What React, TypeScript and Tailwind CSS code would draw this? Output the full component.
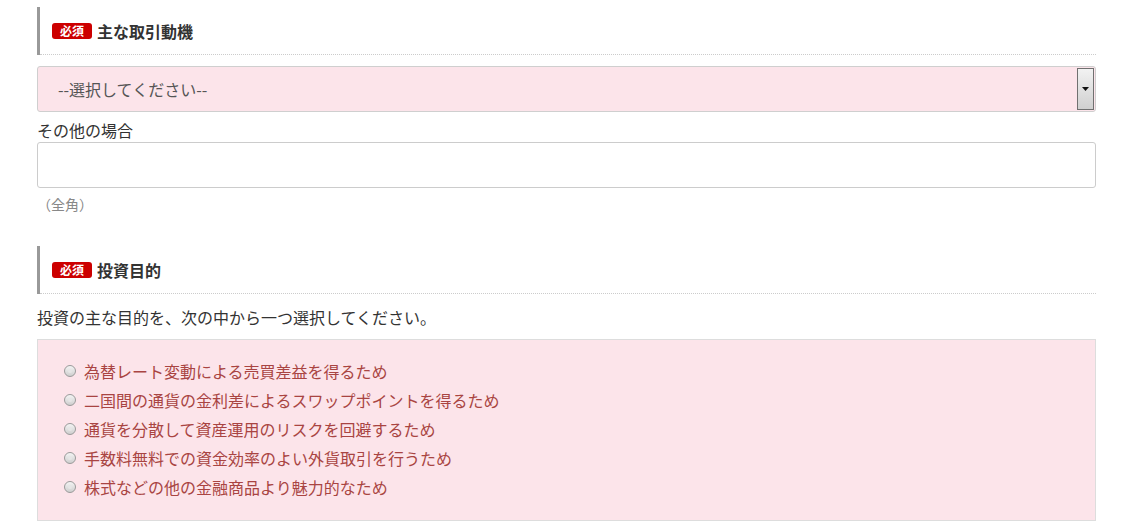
import React from 'react';

const FONT = '"Noto Sans CJK JP", "Noto Sans", "Liberation Sans", sans-serif';

const OPTIONS = [
  '為替レート変動による売買差益を得るため',
  '二国間の通貨の金利差によるスワップポイントを得るため',
  '通貨を分散して資産運用のリスクを回避するため',
  '手数料無料での資金効率のよい外貨取引を行うため',
  '株式などの他の金融商品より魅力的なため',
];

function Heading({ title }: { title: string }) {
  return (
    <div className="border-l-[3px] border-solid border-l-[#999]">
      <div className="flex h-[48px] items-center border-b border-dotted border-b-[#ccc] pl-[12px]">
        <span className="mr-[5px] flex h-[16px] w-[40px] items-center justify-center rounded-[3px] bg-[#cc0000] text-[12px] font-bold leading-none text-white">
          必須
        </span>
        <span className="text-[16px] font-bold text-[#333]">{title}</span>
      </div>
    </div>
  );
}

function Radio() {
  return (
    <span className="flex h-[12px] w-[12px] items-center justify-center rounded-full border border-[#9a9a9a] bg-gradient-to-b from-[#f4f4f4] to-[#cfcfcf]">
      <span className="h-[4px] w-[4px] rounded-full bg-[#e6e6e6]" />
    </span>
  );
}

export default function App() {
  return (
    <div className="min-h-[532px] bg-white pt-[7px]" style={{ fontFamily: FONT }}>
      <div className="ml-[37px] w-[1059px]">
        <Heading title="主な取引動機" />

        {/* select */}
        <div className="mt-[11px] flex h-[46px] items-stretch rounded-[3px] border border-[#cfcfcf] bg-[#fce4ea]">
          <div className="flex flex-1 items-center pl-[20px] text-[16px] text-[#555]">--選択してください--</div>
          <div className="m-[1px] flex w-[17px] items-center justify-center border border-[#707070] bg-gradient-to-b from-[#f2f2f2] to-[#d0d0d0]">
            <svg width="7" height="4" viewBox="0 0 7 4">
              <path d="M0 0h7L3.5 4z" fill="#111" />
            </svg>
          </div>
        </div>

        <div className="mt-[6px] h-[24px] text-[16px] leading-[24px] text-[#333]">その他の場合</div>
        <div className="h-[46px] rounded-[3px] border border-[#ccc] bg-white" />
        <div className="mt-[6px] text-[14px] leading-[20px] text-[#888]">（全角）</div>

        <div className="mt-[32px]">
          <Heading title="投資目的" />
        </div>

        <p className="mt-[12px] text-[16px] leading-[22px] text-[#333]">
          投資の主な目的を、次の中から一つ選択してください。
        </p>

        <div className="mt-[11px] border border-[#ddd] bg-[#fce4ea] pt-[16px] pb-[19px] pl-[26px]">
          {OPTIONS.map((o) => (
            <label key={o} className="flex h-[29px] items-center gap-[8px] text-[16px] text-[#a94442]">
              <Radio />
              <span>{o}</span>
            </label>
          ))}
        </div>
      </div>
    </div>
  );
}
